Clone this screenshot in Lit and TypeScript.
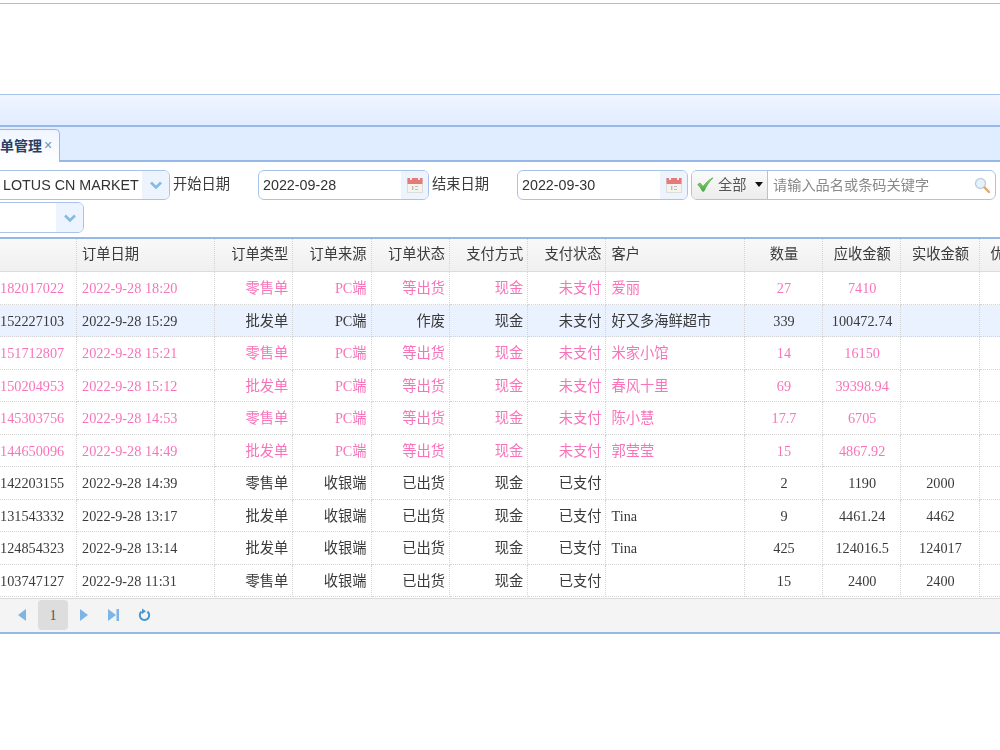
import { LitElement, html, css, svg } from "lit";
import { customElement } from "lit/decorators.js";

type Row = [string, string, string, string, string, string, string, string, string, string, string, boolean];
const rows: Row[] = [
  ["182017022", "2022-9-28 18:20", "零售单", "PC端", "等出货", "现金", "未支付", "爱丽", "27", "7410", "", true],
  ["152227103", "2022-9-28 15:29", "批发单", "PC端", "作废", "现金", "未支付", "好又多海鲜超市", "339", "100472.74", "", false],
  ["151712807", "2022-9-28 15:21", "零售单", "PC端", "等出货", "现金", "未支付", "米家小馆", "14", "16150", "", true],
  ["150204953", "2022-9-28 15:12", "批发单", "PC端", "等出货", "现金", "未支付", "春风十里", "69", "39398.94", "", true],
  ["145303756", "2022-9-28 14:53", "零售单", "PC端", "等出货", "现金", "未支付", "陈小慧", "17.7", "6705", "", true],
  ["144650096", "2022-9-28 14:49", "批发单", "PC端", "等出货", "现金", "未支付", "郭莹莹", "15", "4867.92", "", true],
  ["142203155", "2022-9-28 14:39", "零售单", "收银端", "已出货", "现金", "已支付", "", "2", "1190", "2000", false],
  ["131543332", "2022-9-28 13:17", "批发单", "收银端", "已出货", "现金", "已支付", "Tina", "9", "4461.24", "4462", false],
  ["124854323", "2022-9-28 13:14", "批发单", "收银端", "已出货", "现金", "已支付", "Tina", "425", "124016.5", "124017", false],
  ["103747127", "2022-9-28 11:31", "零售单", "收银端", "已出货", "现金", "已支付", "", "15", "2400", "2400", false],
];
const heads = ["", "订单日期", "订单类型", "订单来源", "订单状态", "支付方式", "支付状态", "客户", "数量", "应收金额", "实收金额", "优惠金额"];
const aligns = ["r", "l", "r", "r", "r", "r", "r", "l", "c", "c", "c", "c"];

const chevron = svg`<svg width="14" height="10" viewBox="0 0 14 10"><path d="M2 2.5 7 7.5 12 2.5" fill="none" stroke="#84bbe4" stroke-width="2.6"/></svg>`;
const calendar = svg`<svg width="16" height="16" viewBox="0 0 16 16"><rect x=".5" y="1.5" width="15" height="14" fill="#f6f3ea" stroke="#dcdcdc"/><rect x=".5" y="1" width="15" height="6" fill="#e57a7a"/><rect x="3" y="0" width="2" height="3" fill="#efefef"/><rect x="11" y="0" width="2" height="3" fill="#efefef"/><path d="M5 9h1.4v4H5zM8 9h3v1H8zM8 12h3v1H8z" fill="#b9bcc4"/></svg>`;

@customElement("app-root")
export class AppRoot extends LitElement {
  static styles = css`
    :host { display: block; width: 1000px; height: 750px; overflow: hidden; background: #fff;
      font: 14.25px "Liberation Sans", "Noto Sans CJK SC", sans-serif; color: #3a3a3a; }
    .page { filter: blur(0.4px); height: 750px; }
    .topline { padding-top: 3px; height: 94px; box-sizing: border-box; }
    .topline div { height: 1px; background: #9fc3f0; }
    .head { height: 33px; box-sizing: border-box; border-top: 1px solid #a5c4ea; border-bottom: 2px solid #95b8e7;
      background: linear-gradient(#f1f6ff, #e0ecff); }
    .tabs { height: 35px; box-sizing: border-box; background: #e0ecff; padding-top: 2px; display: flex; overflow: hidden; }
    .tab { margin-left: -16px; width: 75.5px; flex: none; box-sizing: border-box; display: flex; align-items: center;
      gap: 2px; padding-left: 1px; padding-bottom: 2px; background: linear-gradient(#eff5ff, #fff); border: 1px solid #95b8e7;
      border-bottom: 0; border-radius: 5px 5px 0 0; font-weight: 700; color: #2a3f63; white-space: nowrap; font-size: 14px; }
    .tab i { font-style: normal; font-weight: 400; color: #6f8fb8; font-size: 14px; }
    .rest { flex: 1; border-bottom: 2px solid #95b8e7; }
    .toolbar { height: 76px; box-sizing: border-box; padding-top: 8px; }
    .line { display: flex; height: 32px; align-items: flex-start; }
    .box { height: 30px; box-sizing: border-box; border: 1px solid #a9c4e8; border-radius: 6px; display: flex;
      align-items: center; background: #fff; overflow: hidden; flex: none; }
    .box .val { flex: 1; padding-left: 4px; font-size: 14.3px; white-space: nowrap; color: #333; }
    .addon { width: 27px; height: 100%; background: #eef4fd; display: flex; align-items: center; justify-content: center; flex: none; }
    .sel1 { width: 180px; margin-left: -10px; }
    .sel1 .val { padding-left: 12px; }
    .sel2 { width: 94px; margin-left: -10px; height: 31px; }
    .lbl { height: 28px; line-height: 28px; white-space: nowrap; color: #3a3a3a; flex: none; margin-left: 3px; width: 85px; }
    .date { width: 171px; }
    .search { width: 305px; margin-left: 3px; }
    .mode { width: 76px; height: 100%; flex: none; display: flex; align-items: center; box-sizing: border-box;
      padding: 0 0 0 5px; gap: 4px; background: linear-gradient(#fafafa, #ececec); border-right: 1px solid #a9c4e8; color: #555; }
    .mode .t { padding-bottom: 3px; }
    .mode svg { margin-bottom: 2px; }
    .caret { width: 0; height: 0; border: 4.5px solid transparent; border-top: 5px solid #111; border-bottom: 0; margin: 0 0 2px 4px; }
    .ph { flex: 1; padding: 0 0 3px 5px; color: #8a8a8a; font-size: 14.2px; white-space: nowrap; }
    .mag { margin-right: 5px; flex: none; }
    .grid { border-top: 2px solid #95b8e7; overflow: hidden; margin-top: -1px; }
    .r { display: grid; grid-template-columns: 77px 138px 78.3px 78.3px 78.3px 78.3px 78.3px 138.5px 78px 78.3px 78.3px 78.3px;
      height: 32.5px; width: 1100px; font-family: "Liberation Serif", "Noto Sans CJK SC", serif; color: #3a3a3a; line-height: 32px; }
    .r.h { height: 33px; line-height: 31px; background: linear-gradient(#f9f9f9, #efefef); font-family: "Liberation Sans", "Noto Sans CJK SC", sans-serif; }
    .r.h .c { border-bottom: 1px solid #dcdcdc; }
    .c { box-sizing: border-box; padding: 0 4px 0 5px; white-space: nowrap; overflow: hidden;
      border-right: 1px dotted #d4d4d4; border-bottom: 1px dotted #d4d4d4; }
    .c.r-a { text-align: right; }
    .c.c-a { text-align: center; }
    .c.first { padding: 0 13px 0 0; }
    .pink { color: #f874ba; }
    .sel { background: #eaf2ff; }
    .pager { height: 36px; box-sizing: border-box; background: #f4f4f4; border-top: 1px solid #dcdcdc; border-bottom: 2px solid #95b8e7;
      display: flex; align-items: center; padding-left: 18px; margin-top: 0.5px; }
    .pager svg { flex: none; }
    .pg { width: 30px; height: 30px; border-radius: 4px; background: #ddd; display: flex; align-items: center; justify-content: center;
      font-family: "Liberation Serif", serif; color: #555; margin: 0 12px; flex: none; }
    .gap { margin-left: 20px; }
    .gap2 { margin-left: 19px; }
  `;

  render() {
    return html`<div class="page">
      <div class="topline"><div></div></div>
      <div class="head"></div>
      <div class="tabs"><div class="tab">订单管理 <i>×</i></div><div class="rest"></div></div>
      <div class="toolbar">
        <div class="line">
          <div class="box sel1"><span class="val">LOTUS CN MARKET</span><span class="addon">${chevron}</span></div>
          <span class="lbl">开始日期</span>
          <div class="box date"><span class="val">2022-09-28</span><span class="addon">${calendar}</span></div>
          <span class="lbl">结束日期</span>
          <div class="box date"><span class="val">2022-09-30</span><span class="addon">${calendar}</span></div>
          <div class="box search">
            <span class="mode">
              <svg width="17" height="15" viewBox="0 0 17 15"><defs><linearGradient id="g" x1="0" y1="0" x2="0" y2="1"><stop offset="0" stop-color="#a8e07a"/><stop offset="1" stop-color="#42a843"/></linearGradient></defs><path d="M.8 7.5 3 6 6.2 9.6C8.6 6 11.5 3 16 .8 12.2 4.5 9.3 9 7 14.2H5.4C4.2 11.6 2.6 9.4.8 7.5Z" fill="url(#g)" stroke="#49a247" stroke-width=".7"/></svg>
              <span class="t">全部</span><span class="caret"></span>
            </span>
            <span class="ph">请输入品名或条码关键字</span>
            <svg class="mag" width="16" height="16" viewBox="0 0 16 16"><circle cx="6.5" cy="6.5" r="5" fill="#e6f1fb" stroke="#bcd0e4" stroke-width="1.4"/><path d="M10.5 10.5 15 15" stroke="#e3a66b" stroke-width="2.4" stroke-linecap="round"/></svg>
          </div>
        </div>
        <div class="line"><div class="box sel2"><span class="val"></span><span class="addon">${chevron}</span></div></div>
      </div>
      <div class="grid">
        <div class="r h">${heads.map((t, i) => html`<div class="c ${aligns[i] === "r" ? "r-a" : aligns[i] === "c" ? "c-a" : ""}">${t}</div>`)}</div>
        ${rows.map((row, n) => html`<div class="r ${row[11] ? "pink" : ""} ${n === 1 ? "sel" : ""}">
          ${row.slice(0, 11).map((t, i) => html`<div class="c ${i === 0 ? "first" : ""} ${aligns[i] === "r" ? "r-a" : aligns[i] === "c" ? "c-a" : ""}">${t}</div>`)}
          <div class="c"></div>
        </div>`)}
      </div>
      <div class="pager">
        <svg width="8" height="12" viewBox="0 0 8 12"><path d="M8 0V12L0 6Z" fill="#7db5e6"/></svg>
        <span class="pg">1</span>
        <svg width="8" height="12" viewBox="0 0 8 12"><path d="M0 0V12L8 6Z" fill="#7db5e6"/></svg>
        <svg class="gap" width="11" height="12" viewBox="0 0 11 12"><path d="M0 0V12L8 6Z" fill="#7db5e6"/><rect x="8.5" width="2.5" height="12" fill="#7db5e6"/></svg>
        <svg class="gap2" width="13" height="14" viewBox="0 0 13 14"><path d="M3.6 3.6A4.7 4.7 0 1 0 9.4 3.6" fill="none" stroke="#4a96cc" stroke-width="2"/><path d="M4 .6V6L8 3.2Z" fill="#4a96cc"/></svg>
      </div>
    </div>`;
  }
}
